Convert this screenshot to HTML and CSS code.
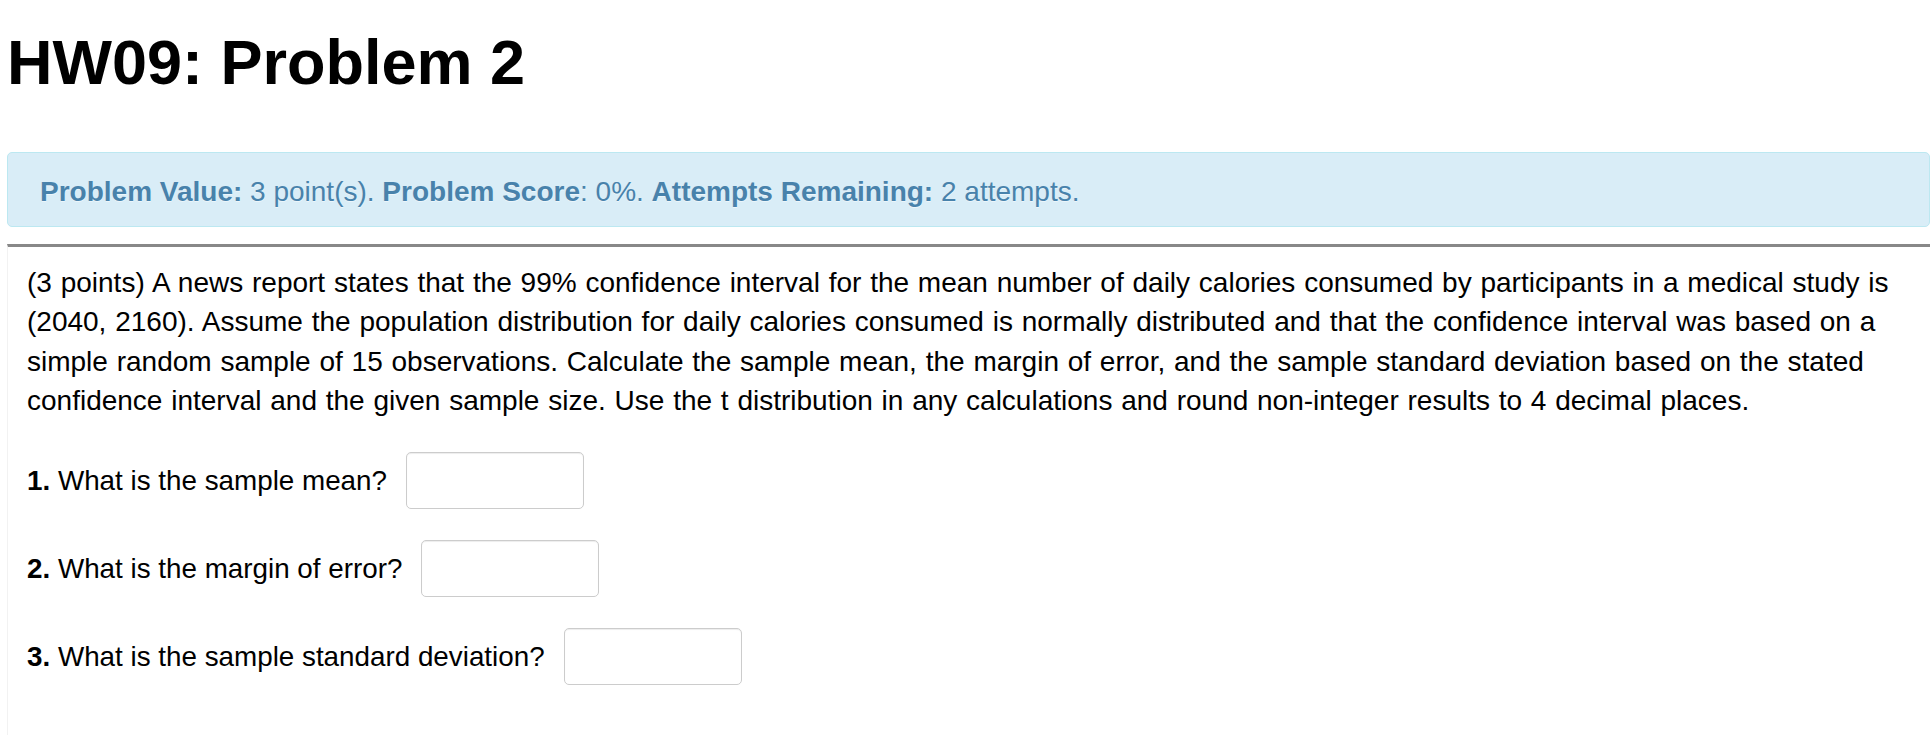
FILE: index.html
```html
<!DOCTYPE html>
<html lang="en">
<head>
    <meta charset="UTF-8">
    <meta name="viewport" content="width=device-width, initial-scale=1.0">
    <title>HW09: Problem 2</title>
    <link rel="stylesheet" href="styles.css">
</head>
<body>
    <div class="page">
        <h1 class="problem-title">HW09: Problem 2</h1>

        <div class="alert-info">
            <strong>Problem Value:</strong> 3 point(s). <strong>Problem Score</strong>: 0%. <strong>Attempts Remaining:</strong> 2 attempts.
        </div>

        <div class="problem-body">
            <p class="problem-text">(3 points) A news report states that the 99% confidence interval for the mean number of daily calories consumed by participants in a medical study is (2040, 2160). Assume the population distribution for daily calories consumed is normally distributed and that the confidence interval was based on a simple random sample of 15 observations. Calculate the sample mean, the margin of error, and the sample standard deviation based on the stated confidence interval and the given sample size. Use the t distribution in any calculations and round non-integer results to 4 decimal places.</p>

            <div class="question">
                <label for="ans1"><b>1.</b> What is the sample mean?</label>
                <input type="text" id="ans1" class="answer">
            </div>
            <div class="question">
                <label for="ans2"><b>2.</b> What is the margin of error?</label>
                <input type="text" id="ans2" class="answer">
            </div>
            <div class="question">
                <label for="ans3"><b>3.</b> What is the sample standard deviation?</label>
                <input type="text" id="ans3" class="answer">
            </div>
        </div>
    </div>
</body>
</html>
```

FILE: styles.css
```css
body {
    margin: 0;
    padding: 0;
    background-color: white;
    font-family: "Liberation Sans", Arial, Helvetica, sans-serif;
    color: #000;
}
.page {
    padding: 28px 1px 0 7px;
}
.problem-title {
    margin: 0 0 55px 0;
    font-size: 63px;
    line-height: 69px;
    font-weight: bold;
}
.alert-info {
    background-color: #d9edf7;
    border: 1px solid #bce8f1;
    border-radius: 5px;
    color: #4882ab;
    text-shadow: 0 1px 0 rgba(255, 255, 255, 0.5);
    font-size: 28px;
    line-height: 41px;
    padding: 18px 32px 14px 32px;
}
.alert-info strong {
    font-weight: bold;
}
.problem-body {
    margin-top: 17px;
    border-top: 3px solid #888;
    border-left: 1px solid #f2f2f2;
    padding: 16px 20px 40px 19px;
    font-size: 27.8px;
    line-height: 39.3px;
}
.problem-text {
    margin: 0 0 32px 0;
    font-size: 28px;
    word-spacing: 1px;
}
.question {
    display: flex;
    align-items: center;
    height: 57px;
    margin-bottom: 31px;
}
.question label {
    margin-right: 19px;
}
.answer {
    box-sizing: border-box;
    width: 178px;
    height: 57px;
    border: 1px solid #ccc;
    border-radius: 5px;
    box-shadow: inset 0 1px 1px rgba(0, 0, 0, 0.075);
    font-size: 25px;
    padding: 6px 10px;
    background-color: white;
}
```
